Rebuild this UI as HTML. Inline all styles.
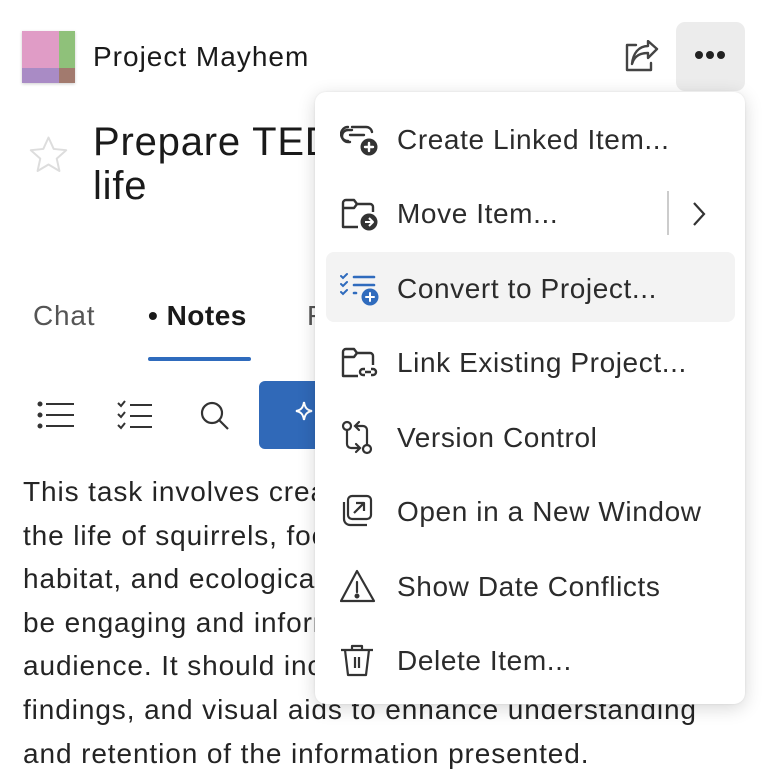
<!DOCTYPE html>
<html><head><meta charset="utf-8"><style>
*{margin:0;padding:0;box-sizing:border-box}
body{width:768px;height:754px;overflow:hidden;background:#fff;font-family:"Liberation Sans",sans-serif;color:#1f1f1f;position:relative}
.abs{position:absolute}
.menu{left:315px;top:92px;width:430px;height:612px;background:#fff;border-radius:11px;box-shadow:0 4px 18px rgba(0,0,0,.16),0 0 2px rgba(0,0,0,.08)}
.item{position:absolute;left:0;width:430px;height:70px;display:flex;align-items:center}
.item span{position:absolute;left:82px;font-size:28px;letter-spacing:0.6px;color:#2b2b2b;white-space:nowrap}
.item svg{position:absolute;left:25px}
.body{left:23px;top:470px;font-size:28px;letter-spacing:0.9px;line-height:43.6px;color:#242424;white-space:nowrap}
</style></head><body>
<div class="abs" style="left:22px;top:31px;width:53px;height:52px;box-shadow:0 1px 3px rgba(0,0,0,.2)">
<div class="abs" style="left:0;top:0;width:37px;height:37px;background:#e09cc6"></div>
<div class="abs" style="left:37px;top:0;width:16px;height:37px;background:#8fc17a"></div>
<div class="abs" style="left:0;top:37px;width:37px;height:15px;background:#a98bc5"></div>
<div class="abs" style="left:37px;top:37px;width:16px;height:15px;background:#a27a6e"></div>
</div>
<div class="abs" style="left:93px;top:41px;font-size:28px;letter-spacing:1px;color:#1a1a1a">Project Mayhem</div>
<svg class="abs" style="left:622px;top:40px" width="38" height="34" viewBox="0 0 38 34" fill="none" stroke="#444" stroke-width="2.4" stroke-linejoin="round" stroke-linecap="round"><path d="M14 5H5v25h24v-7"/><path d="M10 24c2-8 8-11 16-11v5l9-9-9-8v5C17 6 11 13 10 24z"/></svg>
<div class="abs" style="left:676px;top:22px;width:69px;height:69px;background:#ececec;border-radius:9px"></div>
<div class="abs" style="left:695px;top:51px;width:8px;height:8px;border-radius:50%;background:#222"></div>
<div class="abs" style="left:706px;top:51px;width:8px;height:8px;border-radius:50%;background:#222"></div>
<div class="abs" style="left:717px;top:51px;width:8px;height:8px;border-radius:50%;background:#222"></div>
<svg class="abs" style="left:27px;top:133px" width="43" height="43" viewBox="0 0 24 24" fill="none" stroke="#ddd" stroke-width="1.1" stroke-linejoin="round"><path d="M12 2.5l2.9 6.4 7 .7-5.3 4.7 1.5 6.9L12 17.6l-6.1 3.6 1.5-6.9-5.3-4.7 7-.7z"/></svg>
<div class="abs" style="left:93px;top:120px;font-size:40px;letter-spacing:0.8px;line-height:44px;color:#1a1a1a">Prepare TED talk on squirrel<br>life</div>
<div class="abs" style="left:33px;top:300px;font-size:28px;letter-spacing:0.8px;color:#555">Chat</div>
<div class="abs" style="left:148px;top:300px;font-size:28px;letter-spacing:0.5px;font-weight:bold;color:#1a1a1a">• Notes</div>
<div class="abs" style="left:307px;top:300px;font-size:28px;color:#555">F</div>
<div class="abs" style="left:148px;top:357px;width:103px;height:4px;border-radius:2px;background:#2f6bbd"></div>
<svg class="abs" style="left:36px;top:400px" width="42" height="30" viewBox="0 0 42 30" fill="none" stroke="#333" stroke-width="2"><circle cx="4" cy="4" r="1.5" fill="#333"/><circle cx="4" cy="15" r="1.5" fill="#333"/><circle cx="4" cy="26" r="1.5" fill="#333"/><path d="M10 4h28M10 15h28M10 26h28"/></svg>
<svg class="abs" style="left:116px;top:400px" width="42" height="30" viewBox="0 0 42 30" fill="none" stroke="#333" stroke-width="2"><path d="M2 3l3 3 4-5M2 14l3 3 4-5M2 25l3 3 4-5M14 5h22M14 16h22M14 27h22"/></svg>
<svg class="abs" style="left:198px;top:400px" width="36" height="32" viewBox="0 0 36 32" fill="none" stroke="#333" stroke-width="2.2"><circle cx="14" cy="13" r="10"/><path d="M21 20l9 9"/></svg>
<div class="abs" style="left:259px;top:381px;width:70px;height:68px;background:#3069b8;border-radius:6px"></div>
<svg class="abs" style="left:292px;top:400px" width="24" height="26" viewBox="0 0 24 26" fill="none" stroke="#fff" stroke-width="2"><path d="M12 2c1 6 3 8 8 9-5 1-7 3-8 9-1-6-3-8-8-9 5-1 7-3 8-9z"/></svg>
<div class="abs body">This task involves creating a TED talk about<br>the life of squirrels, focusing on their behavior,<br>habitat, and ecological importance. The talk<br>be engaging and informative, suitable for a<br>audience. It should include research, interesting<br>findings, and visual aids to enhance understanding<br>and retention of the information presented.</div>

<div class="abs menu">
<div class="abs" style="left:11px;top:160px;width:409px;height:70px;background:#f3f3f3;border-radius:8px"></div>
<div class="item" style="top:13px"><svg width="40" height="36" viewBox="0 0 40 36" fill="none" stroke="#333" stroke-width="2.4" stroke-linecap="round"><path d="M12 5h14a6 6 0 0 1 6 5M10 20H8a6 6 0 0 1 0-12h4M10 13h14"/><path d="M8 5a7 7 0 0 0 0 14"/><circle cx="29" cy="25" r="8.5" fill="#333" stroke="none"/><path d="M29 21v8M25 25h8" stroke="#fff"/></svg><span>Create Linked Item...</span></div>
<div class="item" style="top:87px"><svg width="40" height="36" viewBox="0 0 40 36" fill="none" stroke="#333" stroke-width="2.4" stroke-linejoin="round"><path d="M18 31H3V7a3 3 0 0 1 3-3h8l3 4h13a3 3 0 0 1 3 3v5M3 12h11l3-4"/><circle cx="29" cy="26" r="8.5" fill="#333" stroke="none"/><path d="M25 26h7M29 22l4 4-4 4" stroke="#fff" stroke-width="2"/></svg><span>Move Item...</span>
<div class="abs" style="left:352px;top:12px;width:2px;height:44px;background:#ccc"></div>
<svg class="abs" style="left:376px;top:22px" width="16" height="26" viewBox="0 0 16 26" fill="none" stroke="#333" stroke-width="2.2"><path d="M3 2l10 11L3 24"/></svg></div>
<div class="item" style="top:162px"><svg width="40" height="36" viewBox="0 0 40 36" fill="none" stroke="#2f6bbd" stroke-width="2" stroke-linecap="round"><path d="M1 5l2 2 4-4M1 13l2 2 4-4M1 21l2 2 4-4"/><path d="M14 6h20M14 14h20M14 22h2" stroke-width="2.6"/><circle cx="30" cy="26" r="8.5" fill="#2f6bbd" stroke="none"/><path d="M30 22v8M26 26h8" stroke="#fff"/></svg><span>Convert to Project...</span></div>
<div class="item" style="top:236px"><svg width="40" height="36" viewBox="0 0 40 36" fill="none" stroke="#333" stroke-width="2.4" stroke-linejoin="round"><path d="M18 31H3V7a3 3 0 0 1 3-3h8l3 4h13a3 3 0 0 1 3 3v9M3 12h11l3-4"/><path d="M25 24h-2a3 3 0 0 0 0 6h2M31 24h2a3 3 0 0 1 0 6h-2M25 27h6"/></svg><span>Link Existing Project...</span></div>
<div class="item" style="top:311px"><svg width="40" height="36" viewBox="0 0 40 36" fill="none" stroke="#333" stroke-width="2.2" stroke-linecap="round"><circle cx="7" cy="6" r="4"/><circle cx="27" cy="29" r="4"/><path d="M7 10v14a4 4 0 0 0 4 4h8M16 24l4 4-4 4M27 25V10a4 4 0 0 0-4-4h-7M19 2l-4 4 4 4"/></svg><span>Version Control</span></div>
<div class="item" style="top:385px"><svg width="40" height="36" viewBox="0 0 40 36" fill="none" stroke="#333" stroke-width="2.2" stroke-linejoin="round"><rect x="8" y="2" width="23" height="23" rx="4"/><path d="M4 8v17a6 6 0 0 0 6 6h17"/><path d="M14 19l10-10M16 9h8v8"/></svg><span>Open in a New Window</span></div>
<div class="item" style="top:460px"><svg width="40" height="36" viewBox="0 0 40 36" fill="none" stroke="#333" stroke-width="2.2" stroke-linejoin="round"><path d="M17 2L1 32h33z"/><path d="M17 13v10" stroke-linecap="round"/><circle cx="17" cy="27" r="1.4" fill="#333"/></svg><span>Show Date Conflicts</span></div>
<div class="item" style="top:534px"><svg width="40" height="36" viewBox="0 0 40 36" fill="none" stroke="#333" stroke-width="2.2" stroke-linejoin="round"><path d="M1 7h32M12 7V3h10v4M5 7l3 25h18l3-25M15 14v11M19 14v11"/></svg><span>Delete Item...</span></div>
</div>
</body></html>
